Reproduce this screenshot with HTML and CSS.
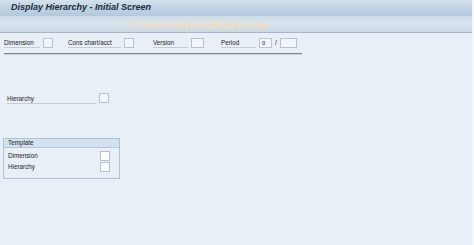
FILE: index.html
```html
<!DOCTYPE html>
<html lang="en">
<head>
    <meta charset="UTF-8">
    <title>Display Hierarchy - Initial Screen</title>
    <link rel="stylesheet" href="styles.css">
</head>
<body>

<div class="screen">
    <div class="titlebar">Display Hierarchy - Initial Screen</div>
    <div class="toolbar"><span class="watermark">&copy; www.tutorialkart.com</span></div>

    <div class="content">
        <!-- Строка выбора -->
        <div class="sel-row">
            <div class="field">
                <span class="label lbl-dim">Dimension</span>
                <span class="box"></span>
            </div>
            <div class="field">
                <span class="label lbl-cons">Cons chart/acct</span>
                <span class="box"></span>
            </div>
            <div class="field">
                <span class="label lbl-ver">Version</span>
                <span class="box wide"></span>
            </div>
            <div class="field">
                <span class="label lbl-per">Period</span>
                <span class="box wide val">0</span>
                <span class="slash">/</span>
                <span class="box year"></span>
            </div>
        </div>
        <div class="sel-line"></div>

        <div class="hier-row">
            <span class="label lbl-hier">Hierarchy</span>
            <span class="box"></span>
        </div>

        <div class="group">
            <div class="group-head">Template</div>
            <div class="group-body">
                <div class="group-row">
                    <span class="glabel">Dimension</span>
                    <span class="box"></span>
                </div>
                <div class="group-row">
                    <span class="glabel">Hierarchy</span>
                    <span class="box"></span>
                </div>
            </div>
        </div>
    </div>
</div>

</body>
</html>
```

FILE: styles.css
```css
html, body {
    margin: 0;
    padding: 0;
}

body {
    width: 474px;
    height: 245px;
    overflow: hidden;
    background-color: #e9eff6;
    font-family: "Liberation Sans", Arial, sans-serif;
    color: #222;
}

.screen {
    height: 245px;
    border-right: 2px solid #f4f7fa;
    box-sizing: border-box;
}

.titlebar {
    height: 16px;
    line-height: 15px;
    padding-left: 11px;
    font-size: 9px;
    font-weight: bold;
    font-style: italic;
    color: #1c2a3a;
    background: linear-gradient(#d6e2ed 0%, #c3d5e5 40%, #b3c9de 100%);
}

.toolbar {
    height: 16px;
    background: linear-gradient(#cfdce7 0%, #d9e4ed 50%, #cbd9e5 100%);
    border-bottom: 1px solid #a8b7c6;
    position: relative;
}

/* водяной знак поверх панели */
.watermark {
    position: absolute;
    left: 127px;
    top: 1px;
    font-family: "Liberation Serif", "Times New Roman", serif;
    font-size: 13.5px;
    font-weight: bold;
    color: #f3dcc0;
    line-height: 16px;
}

.content {
    padding: 5px 0 0 4px;
}

.sel-row {
    display: flex;
    align-items: flex-start;
    height: 11px;
}

.field {
    display: flex;
    align-items: flex-start;
    margin-right: 15px;
}

.label {
    font-size: 6.3px;
    line-height: 10px;
    height: 10px;
    border-bottom: 1px solid #c2ccd6;
    box-sizing: border-box;
    margin-right: 3px;
}

.lbl-dim { width: 36px; }
.lbl-cons { width: 53px; }
.lbl-ver { width: 35px; margin-left: 4px; }
.lbl-per { width: 35px; margin-left: 2px; }

.box {
    display: inline-block;
    width: 10px;
    height: 10px;
    box-sizing: border-box;
    border: 1px solid #b7c3cf;
    background-color: #f2f6fa;
    font-size: 6px;
    line-height: 8px;
    padding-left: 2px;
}

.box.wide {
    width: 13px;
}

.box.year {
    width: 17px;
}

.slash {
    font-size: 6.5px;
    line-height: 10px;
    width: 8px;
    text-align: center;
}

.sel-line {
    width: 298px;
    margin-top: 4px;
    height: 1px;
    background-color: #7f8893;
    border-bottom: 1px solid #c9d2db;
}

.hier-row {
    display: flex;
    margin: 38px 0 0 3px;
}

.lbl-hier {
    width: 89px;
    margin-right: 3px;
    line-height: 11px;
    height: 11px;
}

.group {
    margin: 34px 0 0 -1px;
    width: 117px;
    border: 1px solid #aec2d6;
    box-sizing: border-box;
}

.group-head {
    height: 8px;
    line-height: 8px;
    font-size: 6.3px;
    padding-left: 4px;
    background-color: #d4e1ee;
    border-bottom: 1px solid #b4c7da;
}

.group-body {
    padding: 2px 0 6px 0;
}

.group-row {
    display: flex;
    align-items: center;
    height: 11px;
}

.glabel {
    width: 92px;
    padding-left: 4px;
    font-size: 6.3px;
}

.group-row .box {
    background-color: #fbfcfe;
    border-color: #b3c0cc;
}
```
